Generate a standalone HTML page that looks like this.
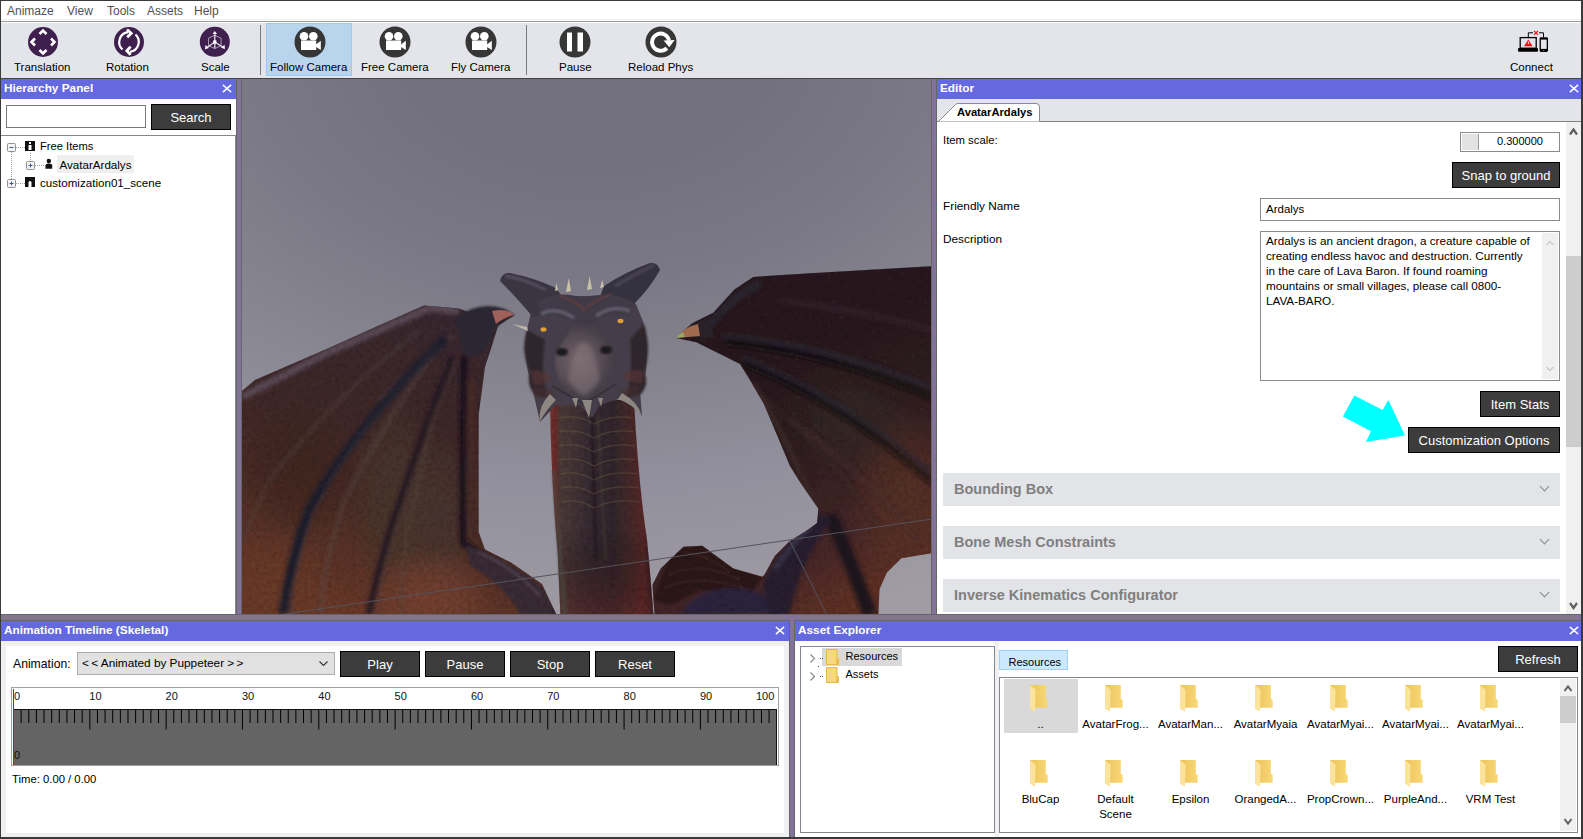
<!DOCTYPE html>
<html><head><meta charset="utf-8">
<style>
html,body{margin:0;padding:0;width:1583px;height:839px;overflow:hidden;background:#fff;}
body{position:relative;font-family:"Liberation Sans",sans-serif;font-size:11.5px;color:#000;}
.a{position:absolute;box-sizing:border-box;}
.t{position:absolute;white-space:nowrap;line-height:1;}
.title{background:#6569e0;color:#fff;font-weight:bold;font-size:11.8px;}
.spl{background:#83739a;}
.btn{position:absolute;box-sizing:border-box;background:#3c3c3c;border:1px solid #000;color:#fff;font-size:13px;text-align:center;}
.sec{position:absolute;left:943px;width:617px;height:33px;background:#e3e4e8;}
.sec span{position:absolute;left:11px;top:9px;font-weight:bold;font-size:14.5px;color:#7f7f7f;line-height:1;}
.sec i{position:absolute;right:12px;top:10px;width:6px;height:6px;border-right:1px solid #888;border-bottom:1px solid #888;transform:rotate(45deg);}
</style></head><body>
<!-- outer border -->
<div class="a" style="left:0;top:0;width:1583px;height:839px;border-left:1px solid #3a3a3a;border-top:1px solid #3a3a3a;border-right:2px solid #3a3a3a;border-bottom:2px solid #3a3a3a;z-index:50;pointer-events:none"></div>
<!-- menu -->
<div class="a" style="left:1px;top:1px;width:1580px;height:20px;background:#fff;"></div>
<div class="a" style="left:1px;top:19px;width:1580px;height:1px;background:#f0f0f0;"></div>
<div class="a" style="left:1px;top:21px;width:1580px;height:1px;background:#999;"></div>
<div class="t" style="left:7px;top:5px;font-size:12px;color:#505050">Animaze</div>
<div class="t" style="left:67px;top:5px;font-size:12px;color:#505050">View</div>
<div class="t" style="left:107px;top:5px;font-size:12px;color:#505050">Tools</div>
<div class="t" style="left:147px;top:5px;font-size:12px;color:#505050">Assets</div>
<div class="t" style="left:194px;top:5px;font-size:12px;color:#505050">Help</div>
<!-- toolbar -->
<div class="a" style="left:1px;top:23px;width:1580px;height:55px;background:#e4e5ea;"></div>
<div class="a" style="left:1px;top:78px;width:1580px;height:1px;background:#444;"></div>
<!-- toolbar items -->
<svg class="a" style="left:0;top:0" width="1583" height="80" viewBox="0 0 1583 80">
 <!-- Translation -->
 <circle cx="43" cy="42" r="15" fill="#3f1f4d"/>
 <g fill="none" stroke="#fff" stroke-width="2.6" stroke-linecap="butt" stroke-linejoin="miter">
  <polyline points="39.5,34 43,30.5 46.5,34"/>
  <polyline points="39.5,50 43,53.5 46.5,50"/>
  <polyline points="35,38.5 31.5,42 35,45.5"/>
  <polyline points="51,38.5 54.5,42 51,45.5"/>
 </g>
 <!-- Rotation -->
 <circle cx="129" cy="42" r="15" fill="#3f1f4d"/>
 <g fill="none" stroke="#fff" stroke-width="2.2">
  <path d="M128 32.2 A10 10 0 0 0 122.5 49.5"/>
  <path d="M130 51.8 A10 10 0 0 0 135.5 34.5"/>
 </g>
 <g fill="none" stroke="#fff" stroke-width="2.8" stroke-linejoin="miter">
  <polyline points="127,29.5 131.2,33.3 127.2,37.3"/>
  <polyline points="130.6,46.6 126.8,50.8 130.6,54.8"/>
 </g>
 <!-- Scale -->
 <circle cx="214.8" cy="41.8" r="15" fill="#3f1f4d"/>
 <g fill="none" stroke="#fff" stroke-width="1" opacity="0.55">
  <polygon points="214.8,35.3 208.5,38.2 208.5,45.6 214.8,48.7 221.1,45.6 221.1,38.2"/>
 </g>
 <g stroke="#fff" stroke-width="1.3" opacity="0.85">
  <line x1="214.8" y1="33" x2="214.8" y2="48"/>
  <line x1="214.8" y1="42" x2="207" y2="47.5"/>
  <line x1="214.8" y1="42" x2="222.6" y2="47"/>
 </g>
 <rect x="213.2" y="40.4" width="3.2" height="3.2" fill="#fff"/>
 <polygon points="212.6,34 214.8,30.9 217,34" fill="#fff"/>
 <polygon points="205,49.3 205.5,45 209,48" fill="#fff"/>
 <polygon points="225,48.9 224.5,44.8 221,47.8" fill="#fff"/>
 <!-- separator -->
 <rect x="260" y="25" width="1" height="50" fill="#7a7a7a"/>
 <!-- follow camera highlight -->
 <rect x="266.5" y="23.5" width="85" height="52" fill="#b9d5ee" stroke="#99c9f5" stroke-width="1"/>
 <g id="cam">
  <circle cx="310" cy="42" r="15.5" fill="#363636"/>
  <circle cx="304" cy="36.2" r="4.3" fill="#fff"/>
  <circle cx="313.3" cy="36.2" r="4.3" fill="#fff"/>
  <rect x="301" y="40.5" width="15.2" height="9.5" fill="#fff"/>
  <polygon points="316,44.5 320.8,40.8 320.8,50 316,47" fill="#fff"/>
 </g>
 <use href="#cam" x="85"/>
 <use href="#cam" x="171"/>
 <rect x="526" y="25" width="1" height="50" fill="#7a7a7a"/>
 <!-- Pause -->
 <circle cx="575" cy="42" r="15.5" fill="#363636"/>
 <rect x="567" y="32.5" width="5" height="19" fill="#fff"/>
 <rect x="577.5" y="32.5" width="5.5" height="19" fill="#fff"/>
 <!-- Reload -->
 <circle cx="661" cy="42" r="15.5" fill="#363636"/>
 <path d="M669.1 40.5 A8.6 8.6 0 1 0 666.9 48.1" fill="none" stroke="#fff" stroke-width="3.8"/>
 <polygon points="663.6,40.6 674.6,40 669.3,47.2" fill="#fff"/>
 <!-- Connect -->
 <g>
  <rect x="1520.2" y="37.6" width="16" height="10.6" fill="none" stroke="#000" stroke-width="1.3"/>
  <rect x="1518" y="48" width="20" height="3.8" rx="1" fill="#000"/>
  <rect x="1539.6" y="37.3" width="8.4" height="14.6" rx="1.4" fill="#000"/>
  <rect x="1540.9" y="39.6" width="5.8" height="9.3" fill="#e4e5ea"/>
  <rect x="1543.3" y="50.2" width="1" height="1" fill="#bbb"/>
  <polyline points="1528.3,37 1528.3,32.8 1533,32.8" fill="none" stroke="#000" stroke-width="1"/>
  <polyline points="1539,32.8 1543.5,32.8 1543.5,37" fill="none" stroke="#000" stroke-width="1"/>
  <path d="M1534 30.8 L1538 34.8 M1538 30.8 L1534 34.8" stroke="#e11" stroke-width="1.2"/>
  <polygon points="1528.3,39.5 1524,46.2 1532.6,46.2" fill="#e11"/>
  <rect x="1527.9" y="41.5" width="0.9" height="2.5" fill="#fff"/>
 </g>
</svg>
<div class="t" style="left:14px;top:62px;font-size:11.5px">Translation</div>
<div class="t" style="left:106px;top:62px;font-size:11.5px">Rotation</div>
<div class="t" style="left:201px;top:62px;font-size:11.5px">Scale</div>
<div class="t" style="left:270px;top:62px;font-size:11.5px">Follow Camera</div>
<div class="t" style="left:361px;top:62px;font-size:11.5px">Free Camera</div>
<div class="t" style="left:451px;top:62px;font-size:11.5px">Fly Camera</div>
<div class="t" style="left:559px;top:62px;font-size:11.5px">Pause</div>
<div class="t" style="left:628px;top:62px;font-size:11.5px">Reload Phys</div>
<div class="t" style="left:1510px;top:62px;font-size:11.5px">Connect</div>


<!-- hierarchy panel -->
<div class="a title" style="left:1px;top:79px;width:235px;height:20px;"><span class="t" style="left:3px;top:4px">Hierarchy Panel</span></div>
<div class="a" style="left:1px;top:99px;width:235px;height:515px;background:#fff;"></div>
<div class="a" style="left:6px;top:105px;width:140px;height:23px;border:1px solid #7a7a7a;background:#fff"></div>
<div class="btn" style="left:151px;top:104px;width:80px;height:26px;"><span class="t" style="left:0;right:0;top:6px;">Search</span></div>
<div class="a" style="left:1px;top:135px;width:235px;height:479px;border-top:1px solid #828790;border-right:1px solid #828790;"></div>
<svg class="a" style="left:0;top:135px" width="236" height="60" viewBox="0 135 236 60">
 <g stroke="#a0a0a0" stroke-width="1" stroke-dasharray="1,1" fill="none">
  <line x1="16" y1="147.5" x2="25" y2="147.5"/>
  <line x1="11.5" y1="152" x2="11.5" y2="179"/>
  <line x1="35" y1="165.5" x2="44" y2="165.5"/>
  <line x1="30.5" y1="153" x2="30.5" y2="161"/>
  <line x1="16" y1="183.5" x2="25" y2="183.5"/>
 </g>
 <g fill="#f4f4f4" stroke="#919191" stroke-width="1">
  <rect x="7.5" y="143.5" width="8" height="8" rx="1"/>
  <rect x="26.5" y="161.5" width="8" height="8" rx="1"/>
  <rect x="7.5" y="179.5" width="8" height="8" rx="1"/>
 </g>
 <g stroke="#3c5a9a" stroke-width="1">
  <line x1="9.5" y1="147.5" x2="13.5" y2="147.5"/>
  <line x1="28.5" y1="165.5" x2="32.5" y2="165.5"/>
  <line x1="30.5" y1="163.5" x2="30.5" y2="167.5"/>
  <line x1="9.5" y1="183.5" x2="13.5" y2="183.5"/>
  <line x1="11.5" y1="181.5" x2="11.5" y2="185.5"/>
 </g>
 <!-- info icon -->
 <rect x="25" y="141" width="10" height="10" fill="#111"/>
 <rect x="29" y="142" width="2" height="2" fill="#fff"/>
 <rect x="28.5" y="145" width="3" height="5" fill="#fff"/>
 <!-- person -->
 <circle cx="48.8" cy="161" r="2.2" fill="#111"/>
 <path d="M45.5 168.8 V165.5 Q45.5 163.5 48.8 163.5 Q52.2 163.5 52.2 165.5 V168.8 Z" fill="#111"/>
 <!-- scene -->
 <path d="M25 177 H35 V187 H31.5 V182 Q30 180 28.5 182 V187 H25 Z" fill="#111"/>
</svg>
<div class="a" style="left:57px;top:155px;width:77px;height:18px;background:#efefef"></div>
<div class="t" style="left:40px;top:141px;font-size:11.2px">Free Items</div>
<div class="t" style="left:59.5px;top:159px;font-size:11.6px">AvatarArdalys</div>
<div class="t" style="left:40px;top:177px;font-size:11.6px">customization01_scene</div>


<!-- splitters -->
<div class="a spl" style="left:237px;top:79px;width:4px;height:536px;"></div>
<div class="a" style="left:236px;top:79px;width:1px;height:536px;background:#666"></div>
<div class="a" style="left:241px;top:79px;width:1px;height:536px;background:#666"></div>
<div class="a spl" style="left:932px;top:79px;width:4px;height:536px;"></div>
<div class="a" style="left:931px;top:79px;width:1px;height:536px;background:#666"></div>
<div class="a" style="left:936px;top:79px;width:1px;height:536px;background:#666"></div>
<div class="a" style="left:1px;top:614px;width:1580px;height:1px;background:#666"></div>
<div class="a spl" style="left:1px;top:615px;width:1580px;height:5px;"></div>
<div class="a" style="left:1px;top:620px;width:789px;height:1px;background:#666"></div>
<div class="a" style="left:794px;top:620px;width:787px;height:1px;background:#666"></div>

<!-- viewport -->
<div class="a" id="vp" style="left:242px;top:79px;width:689px;height:535px;background:#85828d;overflow:hidden"></div>
<svg class="a" style="left:242px;top:79px" width="689" height="535" viewBox="242 79 689 535">
 <defs>
  <radialGradient id="sky" gradientUnits="userSpaceOnUse" cx="590" cy="40" r="600" gradientTransform="translate(590 40) scale(1.43 1) translate(-590 -40)">
   <stop offset="0" stop-color="#72707c"/>
   <stop offset="0.2" stop-color="#72707c"/>
   <stop offset="0.395" stop-color="#7a7884"/>
   <stop offset="0.59" stop-color="#878590"/>
   <stop offset="0.745" stop-color="#92909c"/>
   <stop offset="1" stop-color="#9f9ca4"/>
  </radialGradient>
  <linearGradient id="lw" gradientUnits="userSpaceOnUse" x1="440" y1="310" x2="360" y2="614">
   <stop offset="0" stop-color="#3a2a32"/>
   <stop offset="0.3" stop-color="#3e2a2c"/>
   <stop offset="0.65" stop-color="#4a2e28"/>
   <stop offset="1" stop-color="#6a3a2c"/>
  </linearGradient>
  <linearGradient id="rw" gradientUnits="userSpaceOnUse" x1="780" y1="290" x2="920" y2="560">
   <stop offset="0" stop-color="#2a1e22"/>
   <stop offset="0.45" stop-color="#2e2022"/>
   <stop offset="0.8" stop-color="#46292a"/>
   <stop offset="1" stop-color="#5e3228"/>
  </linearGradient>
  <linearGradient id="nk" gradientUnits="userSpaceOnUse" x1="550" y1="0" x2="654" y2="0">
   <stop offset="0" stop-color="#7a3634"/>
   <stop offset="0.05" stop-color="#6a2c2a"/>
   <stop offset="0.1" stop-color="#4e3c3a"/>
   <stop offset="0.35" stop-color="#3a2e34"/>
   <stop offset="0.6" stop-color="#33282e"/>
   <stop offset="0.8" stop-color="#4a2c2c"/>
   <stop offset="0.9" stop-color="#5a2a2a"/>
   <stop offset="1" stop-color="#2a2428"/>
  </linearGradient>
  <radialGradient id="hd" gradientUnits="userSpaceOnUse" cx="584" cy="368" r="80">
   <stop offset="0" stop-color="#7a6e72"/>
   <stop offset="0.3" stop-color="#54494e"/>
   <stop offset="0.65" stop-color="#3a3238"/>
   <stop offset="1" stop-color="#2a2428"/>
  </radialGradient>
  <filter id="bl1"><feGaussianBlur stdDeviation="1"/></filter>
  <filter id="bl06"><feGaussianBlur stdDeviation="0.6"/></filter>
  <filter id="bl2"><feGaussianBlur stdDeviation="2"/></filter>
  <filter id="bl4"><feGaussianBlur stdDeviation="4"/></filter>
  <filter id="bl8" x="-50%" y="-50%" width="200%" height="200%"><feGaussianBlur stdDeviation="10"/></filter>
  <filter id="tex" x="0" y="0" width="1" height="1">
   <feTurbulence type="fractalNoise" baseFrequency="0.25" numOctaves="2" seed="5" result="n"/>
   <feColorMatrix in="n" type="matrix" values="0 0 0 0 0  0 0 0 0 0  0 0 0 0 0  0 0 0 0.5 -0.15" result="a"/>
   <feComposite in="a" in2="SourceGraphic" operator="in" result="d"/>
   <feMerge><feMergeNode in="SourceGraphic"/><feMergeNode in="d"/></feMerge>
  </filter>
  <path id="lwp" d="M242 391 L255 380 L329 348 L380 325 L424 305.6 L459 308.6 L476 315 L492 310 L505 311 L514.7 315 L498 326 L492 345.5 L485 367 L478.6 415 L478.6 532 L485 549.6 L511 562.6 L542 584 L556 614 L242 614 Z"/>
  <path id="rwp" d="M676.2 338 L692.2 323.3 L713.3 312.8 L734.4 289.5 L753.4 276.9 L818.8 272.7 L932 266.3 L932 553 L901.2 558.2 L886.7 572.7 L879.5 589.3 L878.4 614 L654.5 614 L652.4 585.1 L660.7 568.6 L683.5 546.8 L702.2 545.7 L733.3 568.6 L762.3 576.8 L764.4 574.8 L774.8 556.1 L789.3 541.6 L805.9 531.2 L817.3 523 L818.3 508.4 L800 482 L790 466 L777 435 L764 404 L750 380 L740 364 L696.4 342.3 Z"/>
  <clipPath id="clw"><use href="#lwp"/></clipPath>
  <clipPath id="crw"><use href="#rwp"/></clipPath>
 <radialGradient id="rg1"><stop offset="0" stop-color="#4a3a30" stop-opacity="0.8"/><stop offset="0.5" stop-color="#4a3a30" stop-opacity="0.56"/><stop offset="1" stop-color="#4a3a30" stop-opacity="0"/></radialGradient>
<radialGradient id="rg2"><stop offset="0" stop-color="#4a3a34" stop-opacity="0.7"/><stop offset="0.5" stop-color="#4a3a34" stop-opacity="0.49"/><stop offset="1" stop-color="#4a3a34" stop-opacity="0"/></radialGradient>
<radialGradient id="rg3"><stop offset="0" stop-color="#6a3c2a" stop-opacity="0.8"/><stop offset="0.5" stop-color="#6a3c2a" stop-opacity="0.56"/><stop offset="1" stop-color="#6a3c2a" stop-opacity="0"/></radialGradient>
<radialGradient id="rg4"><stop offset="0" stop-color="#7a4434" stop-opacity="0.8"/><stop offset="0.5" stop-color="#7a4434" stop-opacity="0.56"/><stop offset="1" stop-color="#7a4434" stop-opacity="0"/></radialGradient>
<radialGradient id="rg5"><stop offset="0" stop-color="#3e2620" stop-opacity="0.6"/><stop offset="0.5" stop-color="#3e2620" stop-opacity="0.42"/><stop offset="1" stop-color="#3e2620" stop-opacity="0"/></radialGradient>
<radialGradient id="rg6"><stop offset="0" stop-color="#5a3428" stop-opacity="0.8"/><stop offset="0.5" stop-color="#5a3428" stop-opacity="0.56"/><stop offset="1" stop-color="#5a3428" stop-opacity="0"/></radialGradient>
<radialGradient id="rg7"><stop offset="0" stop-color="#2a2430" stop-opacity="0.9"/><stop offset="0.5" stop-color="#2a2430" stop-opacity="0.63"/><stop offset="1" stop-color="#2a2430" stop-opacity="0"/></radialGradient>
 <radialGradient id="rgx1"><stop offset="0" stop-color="#3a2e2a" stop-opacity="0.7"/><stop offset="1" stop-color="#3a2e2a" stop-opacity="0"/></radialGradient>
 </defs>
 <rect x="242" y="79" width="689" height="535" fill="url(#sky)"/>
 <!-- left wing -->
 <g filter="url(#tex)">
 <use href="#lwp" fill="url(#lw)"/>
 <g clip-path="url(#clw)">
  <ellipse cx="395" cy="500" rx="45" ry="105" fill="url(#rg1)"/>
  <ellipse cx="440" cy="520" rx="38" ry="90" fill="url(#rg2)"/>
  <ellipse cx="270" cy="590" rx="60" ry="68" fill="url(#rg3)"/>
  <ellipse cx="430" cy="600" rx="68" ry="52" fill="url(#rg4)"/>
  <ellipse cx="300" cy="470" rx="60" ry="75" fill="url(#rg5)"/>
  <g filter="url(#bl2)">
   <path d="M420 330 Q330 400 270 480 Q250 520 242 540" stroke="#54403e" stroke-width="4" fill="none" opacity="0.5"/>
   <path d="M436 350 Q380 430 345 500 Q325 560 320 614" stroke="#5a4a44" stroke-width="5" fill="none" opacity="0.45"/>
   <path d="M446 365 Q425 450 410 520 Q400 580 402 614" stroke="#5a4a40" stroke-width="4" fill="none" opacity="0.4"/>
   <path d="M455 335 Q420 360 380 400" stroke="#54444a" stroke-width="5" fill="none" opacity="0.5"/>
   <path d="M446 338 Q360 420 309 509 Q290 560 283 614" stroke="#22222e" stroke-width="9" fill="none"/>
   <path d="M440 345 Q358 425 313 512 Q296 560 290 614" stroke="#3a3a4a" stroke-width="2" fill="none" opacity="0.6"/>
   <path d="M452 356 Q420 440 392 524 Q375 580 369 614" stroke="#281e26" stroke-width="6" fill="none"/>
   <path d="M456 360 Q426 440 398 524 Q381 580 375 614" stroke="#4a3a3a" stroke-width="2" fill="none" opacity="0.7"/>
   <path d="M242 397 L329 352 L429 308 L459 311" stroke="#5e4e5a" stroke-width="7" fill="none"/>
   <path d="M464 356 Q462 450 463 543 Q500 565 556 614" stroke="#1e1820" stroke-width="6" fill="none"/>
   <path d="M472 380 Q471 470 474 535" stroke="#4a2e2c" stroke-width="7" fill="none"/>
  </g>
  <path d="M466 545 Q510 560 545 590 L556 614 L520 614 Q505 585 470 565 Z" fill="#3a2e38" filter="url(#bl1)"/>
  <path d="M478 552 Q512 566 540 596" stroke="#5a4a5a" stroke-width="3" fill="none" opacity="0.7" filter="url(#bl1)"/>
 </g>
 </g>
 <!-- left claw -->
 <path d="M455 318 Q480 300 505 309 L514.7 315 Q498 318 490 340 Q480 360 465 355 Z" fill="#2a2830" filter="url(#bl1)"/>
 <path d="M492 311 Q506 308 514.7 315 Q504 317 496 324 Z" fill="#a0605a"/>
 <!-- right wing -->
 <g filter="url(#tex)">
 <use href="#rwp" fill="url(#rw)"/>
 <g clip-path="url(#crw)">
  <ellipse cx="905" cy="500" rx="60" ry="90" fill="url(#rg6)"/>
  <ellipse cx="850" cy="420" rx="70" ry="60" fill="url(#rgx1)"/>
  <g filter="url(#bl2)">
   <path d="M725 342 Q830 352 932 397" stroke="#141014" stroke-width="8" fill="none" opacity="0.6"/>
   <path d="M722 336 Q830 345 932 388" stroke="#2e2e3a" stroke-width="4" fill="none" opacity="0.7"/>
   <path d="M745 364 Q840 402 932 482" stroke="#141014" stroke-width="7" fill="none" opacity="0.6"/>
   <path d="M742 358 Q840 395 932 473" stroke="#2a2a36" stroke-width="4" fill="none" opacity="0.7"/>
   <path d="M700 338 Q725 300 760 283" stroke="#2e2a36" stroke-width="7" fill="none"/>
   <path d="M752 384 Q790 440 815 510" stroke="#3e2a2a" stroke-width="6" fill="none"/>
   <path d="M780 300 Q860 310 932 330" stroke="#3a2a30" stroke-width="5" fill="none" opacity="0.6"/>
   <path d="M790 420 Q850 460 920 540" stroke="#4a3230" stroke-width="5" fill="none" opacity="0.5"/>
   <path d="M760 395 Q830 450 880 530" stroke="#3e2a2c" stroke-width="4" fill="none" opacity="0.5"/>
   <path d="M830 515 Q850 560 870 614" stroke="#201a24" stroke-width="14" fill="none"/>
  </g>
  <path d="M654 600 L668 562 L683.5 546.8 L690 548 L702.2 545.7 L733.3 568.6 L762 577 L750 595 L700 590 L670 605 Z" fill="#2e1c1c" filter="url(#bl1)"/>
  <g stroke="#4a3430" stroke-width="1.5" fill="none" opacity="0.8" filter="url(#bl1)">
   <path d="M668 575 Q700 560 740 580"/><path d="M664 588 Q700 572 748 590"/><path d="M686 552 Q710 556 730 572"/>
  </g>
  <path d="M680 614 Q700 585 740 588 Q770 592 790 614 Z" fill="#2e2840" filter="url(#bl2)"/>
  <path d="M762 585 Q775 555 818 512 L832 520 Q800 560 790 614 L770 614 Z" fill="#2a2432" filter="url(#bl2)"/>
  <path d="M775 570 Q790 545 812 525" stroke="#4a4a62" stroke-width="4" fill="none" opacity="0.7" filter="url(#bl2)"/>
 </g>
 </g>
 <!-- right claw -->
 <path d="M676.2 338 Q690 322 708 318 L715 338 Q695 336 676.2 338 Z" fill="#2a2028"/>
 <path d="M676.2 338 Q684 327 698 324 L700 336 Z" fill="#a06a50"/>
 <path d="M676.2 338 Q679 334 683 332 L685 337 Z" fill="#98a868"/>
 <!-- neck -->
 <linearGradient id="nk2" gradientUnits="userSpaceOnUse" x1="0" y1="400" x2="0" y2="614">
   <stop offset="0" stop-color="#000" stop-opacity="0"/>
   <stop offset="0.6" stop-color="#000" stop-opacity="0"/>
   <stop offset="1" stop-color="#6a2a2a" stop-opacity="0.45"/>
 </linearGradient>
 <g filter="url(#tex)">
 <path d="M550 400 Q551 480 557.8 553 L560.4 614 L653.4 614 Q650 570 647 540 Q638 480 634 400 Z" fill="url(#nk)"/>
 <path d="M550 400 Q551 480 557.8 553 L560.4 614 L653.4 614 Q650 570 647 540 Q638 480 634 400 Z" fill="url(#nk2)"/>
 </g>
 <path d="M552 470 Q556 540 562 614 L568 614 Q560 540 556 470 Z" fill="#4a4a40" opacity="0.6" filter="url(#bl1)"/>
 <g filter="url(#bl1)" opacity="0.8">
  <path d="M592 415 Q594 500 596 560" stroke="#1e181e" stroke-width="2.5" fill="none"/>
  <path d="M598 415 Q602 500 606 560" stroke="#3e3a30" stroke-width="2" fill="none"/>
 </g>
 <g stroke="#7a6a48" stroke-width="1.2" fill="none" opacity="0.35">
  <path d="M558 418 Q578 414 594 424 Q612 414 634 418"/>
  <path d="M558 432 Q578 428 594 438 Q612 428 634 432"/>
  <path d="M559 446 Q578 442 594 452 Q612 442 635 446"/>
  <path d="M559 460 Q578 456 594 466 Q612 456 636 460"/>
  <path d="M560 474 Q578 470 594 480 Q612 470 637 474"/>
  <path d="M561 488 Q578 484 594 494 Q612 484 638 488"/>
  <path d="M562 502 Q578 498 594 508 Q612 498 640 502"/>
 </g>
 <!-- head -->
 <radialGradient id="snt" gradientUnits="userSpaceOnUse" cx="578" cy="360" r="40">
  <stop offset="0" stop-color="#7a6a6e"/>
  <stop offset="0.6" stop-color="#5a4e56"/>
  <stop offset="1" stop-color="#4a4048" stop-opacity="0"/>
 </radialGradient>
 <g filter="url(#bl06)">
 <!-- face base -->
 <path d="M531 312 Q545 296 584 296 Q625 294 636 304 L644 324 Q648 350 646 372 L640 391 L642 416 Q632 402 622 398 L600 405 L592 418 L580 405 L556 405 L540 422 Q536 405 533 391 L528 372 Q524 350 527 330 Z" fill="#443e48"/>
 <!-- side frills -->
 <g filter="url(#bl1)">
  <path d="M527 330 Q520 350 530 372 Q526 385 535 395 L548 398 Q540 370 545 340 Z" fill="#2e262c"/>
  <path d="M644 324 Q652 350 644 372 Q650 385 640 395 L626 398 Q634 370 630 340 Z" fill="#2e262c"/>
  <path d="M530 372 Q540 368 552 378 Q545 386 534 385 Z" fill="#5a3634" opacity="0.6"/>
  <path d="M644 372 Q634 366 622 376 Q630 384 642 383 Z" fill="#5a3634" opacity="0.6"/>
  <path d="M532 388 Q545 386 556 394 Q545 400 536 398 Z" fill="#4a3232" opacity="0.5"/>
  <path d="M640 386 Q628 384 618 392 Q628 398 638 396 Z" fill="#4a3232" opacity="0.5"/>
 </g>
 <!-- horns -->
 <path d="M500 281 Q502 272 510 273 Q535 278 556 288 L566 302 Q550 318 532 316 Q515 296 500 281 Z" fill="#3a3442"/>
 <path d="M505 276 Q525 279 546 290" stroke="#5e5868" stroke-width="3" fill="none" opacity="0.7" filter="url(#bl1)"/>
 <path d="M660 270 Q658 262 650 263 Q625 272 604 286 L598 302 Q618 312 634 304 Q650 288 660 270 Z" fill="#363240"/>
 <path d="M654 265 Q635 274 615 286" stroke="#55505e" stroke-width="3" fill="none" opacity="0.7" filter="url(#bl1)"/>
 <!-- brow -->
 <path d="M538 300 Q560 290 584 298 Q610 290 634 302 L630 318 Q612 310 596 322 L584 330 L572 322 Q556 312 540 318 Z" fill="#403a46"/>
 <g filter="url(#bl1)" opacity="0.75">
  <path d="M541 314 Q556 306 574 318" stroke="#6a6a7a" stroke-width="3.5" fill="none"/>
  <path d="M596 316 Q612 304 630 311" stroke="#6a6a7a" stroke-width="3.5" fill="none"/>
  <path d="M560 296 Q575 300 584 310 Q594 300 612 294" stroke="#6a4040" stroke-width="2" fill="none"/>
 </g>
 <!-- snout -->
 <path d="M576 318 Q584 314 592 318 Q600 335 612 352 Q616 372 604 388 Q594 398 584 402 Q574 398 564 388 Q552 372 556 352 Q568 335 576 318 Z" fill="url(#snt)" opacity="0.85" filter="url(#bl1)"/>
 <path d="M578 345 Q584 340 590 345 Q598 365 600 380 Q592 392 584 396 Q576 392 568 380 Q570 365 578 345 Z" fill="#8a7c7e" opacity="0.5" filter="url(#bl2)"/>
 <ellipse cx="562" cy="352" rx="6" ry="4" fill="#1e1a1e" filter="url(#bl1)"/>
 <ellipse cx="606" cy="350" rx="6" ry="4" fill="#1e1a1e" filter="url(#bl1)"/>
 <path d="M552 386 L584 404 L616 384" stroke="#2a2228" stroke-width="2" fill="none" opacity="0.5"/>
 <!-- tusks & fangs -->
 <g fill="#8e8680">
  <path d="M550 394 Q538 406 539.6 421.9 Q546 410 556 400 Z"/>
  <path d="M622 393 Q638 402 641.8 415.6 Q632 404 618 399 Z"/>
  <path d="M582 400 L589 418 L592 400 Z"/>
  <path d="M572 398 L576 408 L578 398 Z"/>
  <path d="M598 398 L601 407 L603 398 Z"/>
 </g>
 </g>
 <ellipse cx="543.5" cy="329.5" rx="3" ry="2.2" fill="#e0a030"/>
 <ellipse cx="620.5" cy="321" rx="3" ry="2.2" fill="#e0a030"/>
 <g fill="#c8c0a8">
  <polygon points="555,291 556.3,283 558,290"/>
  <polygon points="566,292 568.8,278 571,291"/>
  <polygon points="587,290 589.7,276 592,289"/>
  <polygon points="600,288 602.2,280 604,287"/>
 </g>
 <polygon points="527,327 512,324 528,331" fill="#c0b8a8"/>
 <g stroke="#55535c" stroke-width="1" fill="none">
  <line x1="285" y1="614" x2="932" y2="519"/>
  <line x1="789.7" y1="540.7" x2="826.5" y2="614"/>
 </g>
</svg>



<!-- editor -->
<div class="a title" style="left:937px;top:79px;width:644px;height:20px;"><span class="t" style="left:3px;top:4px">Editor</span></div>
<div class="a" style="left:937px;top:99px;width:644px;height:23px;background:#e4e5ea;"></div>
<div class="a" style="left:937px;top:121px;width:644px;height:1px;background:#828282;"></div>
<div class="a" style="left:937px;top:122px;width:644px;height:492px;background:#fff;"></div>
<!-- tab -->
<svg class="a" style="left:937px;top:99px" width="120" height="24" viewBox="937 99 120 24">
 <path d="M938.5 121.5 L955.5 104.5 Q956.5 103.5 958 103.5 L1036 103.5 Q1039.5 103.5 1039.5 107 L1039.5 121.5" fill="#fff" stroke="#8a8a8a" stroke-width="1"/>
</svg>
<div class="t" style="left:957px;top:107px;font-size:11.2px;font-weight:bold">AvatarArdalys</div>
<div class="t" style="left:943px;top:134.5px;font-size:11.3px">Item scale:</div>
<div class="a" style="left:1460px;top:132px;width:100px;height:20px;border:1px solid #8a8a8a;background:#fff"></div>
<div class="a" style="left:1462px;top:134px;width:17px;height:16px;background:#e3e3e3;border-right:1px solid #9a9a9a"></div>
<div class="t" style="left:1497px;top:136px;font-size:11px">0.300000</div>
<div class="btn" style="left:1452px;top:162px;width:108px;height:26px;"><span class="t" style="left:0;right:0;top:5.5px;">Snap to ground</span></div>
<div class="t" style="left:943px;top:201px;font-size:11.8px">Friendly Name</div>
<div class="a" style="left:1260px;top:198px;width:300px;height:23px;border:1px solid #8a8a8a;background:#fff"></div>
<div class="t" style="left:1266px;top:204px;font-size:11.5px">Ardalys</div>
<div class="t" style="left:943px;top:234px;font-size:11.8px">Description</div>
<div class="a" style="left:1260px;top:231px;width:300px;height:150px;border:1px solid #8a8a8a;background:#fff"></div>
<div class="a" style="left:1542px;top:233px;width:16px;height:146px;background:#f0f0f0"></div>
<svg class="a" style="left:1542px;top:233px" width="16" height="146">
 <polyline points="4.5,12 8,8.5 11.5,12" fill="none" stroke="#c8c8c8" stroke-width="1.2"/>
 <polyline points="4.5,134 8,137.5 11.5,134" fill="none" stroke="#c8c8c8" stroke-width="1.2"/>
</svg>
<div class="a" style="left:1266px;top:233px;font-size:11.7px;line-height:15px;white-space:nowrap">Ardalys is an ancient dragon, a creature capable of<br>creating endless havoc and destruction. Currently<br>in the care of Lava Baron. If found roaming<br>mountains or small villages, please call 0800-<br>LAVA-BARO.</div>
<div class="btn" style="left:1480px;top:391px;width:80px;height:26px;"><span class="t" style="left:0;right:0;top:5.5px;">Item Stats</span></div>
<div class="btn" style="left:1408px;top:427px;width:152px;height:26px;"><span class="t" style="left:0;right:0;top:5.5px;">Customization Options</span></div>
<svg class="a" style="left:1335px;top:385px" width="80" height="70" viewBox="1335 385 80 70">
 <polygon points="1354.35,395.4 1382.7,410 1388.4,400 1405,435.5 1365.9,442.1 1371,431.3 1342.9,416.5" fill="#00ffff"/>
</svg>
<div class="sec" style="top:473px"><span>Bounding Box</span><i></i></div>
<div class="sec" style="top:526px"><span>Bone Mesh Constraints</span><i></i></div>
<div class="sec" style="top:579px"><span>Inverse Kinematics Configurator</span><i></i></div>
<!-- editor scrollbar -->
<div class="a" style="left:1566px;top:122px;width:15px;height:492px;background:#f0f0f0"></div>
<div class="a" style="left:1566px;top:256px;width:15px;height:191px;background:#cdcdcd"></div>
<svg class="a" style="left:1566px;top:122px" width="15" height="492">
 <polyline points="4,12.5 7.5,7.5 11,12.5" fill="none" stroke="#606060" stroke-width="2.2"/>
 <polyline points="4,481 7.5,486 11,481" fill="none" stroke="#606060" stroke-width="2.2"/>
</svg>


<!-- animation timeline -->
<div class="a title" style="left:1px;top:621px;width:788px;height:20px;"><span class="t" style="left:3px;top:4px">Animation Timeline (Skeletal)</span></div>
<div class="a" style="left:1px;top:641px;width:788px;height:196px;background:#f0f0f0;"></div>
<div class="a" style="left:6px;top:646px;width:778px;height:187px;background:#fff;"></div>
<div class="t" style="left:13px;top:658px;font-size:12.2px">Animation:</div>
<div class="a" style="left:77px;top:652px;width:258px;height:23px;border:1px solid #adadad;background:#e1e1e1"></div>
<div class="t" style="left:82px;top:658px;font-size:11.8px">&lt;&thinsp;&lt; Animated by Puppeteer &gt;&thinsp;&gt;</div>
<svg class="a" style="left:318px;top:659px" width="12" height="10"><polyline points="1.5,2.5 5.5,6.5 9.5,2.5" fill="none" stroke="#333" stroke-width="1.1"/></svg>
<div class="btn" style="left:340px;top:651px;width:80px;height:26px;"><span class="t" style="left:0;right:0;top:5.5px;">Play</span></div>
<div class="btn" style="left:425px;top:651px;width:80px;height:26px;"><span class="t" style="left:0;right:0;top:5.5px;">Pause</span></div>
<div class="btn" style="left:510px;top:651px;width:80px;height:26px;"><span class="t" style="left:0;right:0;top:5.5px;">Stop</span></div>
<div class="btn" style="left:595px;top:651px;width:80px;height:26px;"><span class="t" style="left:0;right:0;top:5.5px;">Reset</span></div>
<div class="a" style="left:11px;top:687px;width:768px;height:79px;border:1px solid #a0a0a0;background:#fff"></div>
<div class="a" style="left:13px;top:709px;width:764px;height:56px;background:#646464;border-top:1px solid #111;border-right:1px solid #111"></div>
<svg class="a" id="ticks" style="left:0;top:700px" width="790" height="40" viewBox="0 700 790 40"><rect x="20.63" y="710" width="1" height="13" fill="#000"/><rect x="28.26" y="710" width="1" height="13" fill="#000"/><rect x="35.90" y="710" width="1" height="13" fill="#000"/><rect x="43.53" y="710" width="1" height="13" fill="#000"/><rect x="51.16" y="710" width="1" height="13" fill="#000"/><rect x="58.79" y="710" width="1" height="13" fill="#000"/><rect x="66.42" y="710" width="1" height="13" fill="#000"/><rect x="74.06" y="710" width="1" height="13" fill="#000"/><rect x="81.69" y="710" width="1" height="13" fill="#000"/><rect x="89.32" y="710" width="1" height="19.5" fill="#000"/><rect x="96.95" y="710" width="1" height="13" fill="#000"/><rect x="104.58" y="710" width="1" height="13" fill="#000"/><rect x="112.22" y="710" width="1" height="13" fill="#000"/><rect x="119.85" y="710" width="1" height="13" fill="#000"/><rect x="127.48" y="710" width="1" height="13" fill="#000"/><rect x="135.11" y="710" width="1" height="13" fill="#000"/><rect x="142.74" y="710" width="1" height="13" fill="#000"/><rect x="150.38" y="710" width="1" height="13" fill="#000"/><rect x="158.01" y="710" width="1" height="13" fill="#000"/><rect x="165.64" y="710" width="1" height="19.5" fill="#000"/><rect x="173.27" y="710" width="1" height="13" fill="#000"/><rect x="180.90" y="710" width="1" height="13" fill="#000"/><rect x="188.54" y="710" width="1" height="13" fill="#000"/><rect x="196.17" y="710" width="1" height="13" fill="#000"/><rect x="203.80" y="710" width="1" height="13" fill="#000"/><rect x="211.43" y="710" width="1" height="13" fill="#000"/><rect x="219.06" y="710" width="1" height="13" fill="#000"/><rect x="226.70" y="710" width="1" height="13" fill="#000"/><rect x="234.33" y="710" width="1" height="13" fill="#000"/><rect x="241.96" y="710" width="1" height="19.5" fill="#000"/><rect x="249.59" y="710" width="1" height="13" fill="#000"/><rect x="257.22" y="710" width="1" height="13" fill="#000"/><rect x="264.86" y="710" width="1" height="13" fill="#000"/><rect x="272.49" y="710" width="1" height="13" fill="#000"/><rect x="280.12" y="710" width="1" height="13" fill="#000"/><rect x="287.75" y="710" width="1" height="13" fill="#000"/><rect x="295.38" y="710" width="1" height="13" fill="#000"/><rect x="303.02" y="710" width="1" height="13" fill="#000"/><rect x="310.65" y="710" width="1" height="13" fill="#000"/><rect x="318.28" y="710" width="1" height="19.5" fill="#000"/><rect x="325.91" y="710" width="1" height="13" fill="#000"/><rect x="333.54" y="710" width="1" height="13" fill="#000"/><rect x="341.18" y="710" width="1" height="13" fill="#000"/><rect x="348.81" y="710" width="1" height="13" fill="#000"/><rect x="356.44" y="710" width="1" height="13" fill="#000"/><rect x="364.07" y="710" width="1" height="13" fill="#000"/><rect x="371.70" y="710" width="1" height="13" fill="#000"/><rect x="379.34" y="710" width="1" height="13" fill="#000"/><rect x="386.97" y="710" width="1" height="13" fill="#000"/><rect x="394.60" y="710" width="1" height="19.5" fill="#000"/><rect x="402.23" y="710" width="1" height="13" fill="#000"/><rect x="409.86" y="710" width="1" height="13" fill="#000"/><rect x="417.50" y="710" width="1" height="13" fill="#000"/><rect x="425.13" y="710" width="1" height="13" fill="#000"/><rect x="432.76" y="710" width="1" height="13" fill="#000"/><rect x="440.39" y="710" width="1" height="13" fill="#000"/><rect x="448.02" y="710" width="1" height="13" fill="#000"/><rect x="455.66" y="710" width="1" height="13" fill="#000"/><rect x="463.29" y="710" width="1" height="13" fill="#000"/><rect x="470.92" y="710" width="1" height="19.5" fill="#000"/><rect x="478.55" y="710" width="1" height="13" fill="#000"/><rect x="486.18" y="710" width="1" height="13" fill="#000"/><rect x="493.82" y="710" width="1" height="13" fill="#000"/><rect x="501.45" y="710" width="1" height="13" fill="#000"/><rect x="509.08" y="710" width="1" height="13" fill="#000"/><rect x="516.71" y="710" width="1" height="13" fill="#000"/><rect x="524.34" y="710" width="1" height="13" fill="#000"/><rect x="531.98" y="710" width="1" height="13" fill="#000"/><rect x="539.61" y="710" width="1" height="13" fill="#000"/><rect x="547.24" y="710" width="1" height="19.5" fill="#000"/><rect x="554.87" y="710" width="1" height="13" fill="#000"/><rect x="562.50" y="710" width="1" height="13" fill="#000"/><rect x="570.14" y="710" width="1" height="13" fill="#000"/><rect x="577.77" y="710" width="1" height="13" fill="#000"/><rect x="585.40" y="710" width="1" height="13" fill="#000"/><rect x="593.03" y="710" width="1" height="13" fill="#000"/><rect x="600.66" y="710" width="1" height="13" fill="#000"/><rect x="608.30" y="710" width="1" height="13" fill="#000"/><rect x="615.93" y="710" width="1" height="13" fill="#000"/><rect x="623.56" y="710" width="1" height="19.5" fill="#000"/><rect x="631.19" y="710" width="1" height="13" fill="#000"/><rect x="638.82" y="710" width="1" height="13" fill="#000"/><rect x="646.46" y="710" width="1" height="13" fill="#000"/><rect x="654.09" y="710" width="1" height="13" fill="#000"/><rect x="661.72" y="710" width="1" height="13" fill="#000"/><rect x="669.35" y="710" width="1" height="13" fill="#000"/><rect x="676.98" y="710" width="1" height="13" fill="#000"/><rect x="684.62" y="710" width="1" height="13" fill="#000"/><rect x="692.25" y="710" width="1" height="13" fill="#000"/><rect x="699.88" y="710" width="1" height="19.5" fill="#000"/><rect x="707.51" y="710" width="1" height="13" fill="#000"/><rect x="715.14" y="710" width="1" height="13" fill="#000"/><rect x="722.78" y="710" width="1" height="13" fill="#000"/><rect x="730.41" y="710" width="1" height="13" fill="#000"/><rect x="738.04" y="710" width="1" height="13" fill="#000"/><rect x="745.67" y="710" width="1" height="13" fill="#000"/><rect x="753.30" y="710" width="1" height="13" fill="#000"/><rect x="760.94" y="710" width="1" height="13" fill="#000"/><rect x="768.57" y="710" width="1" height="13" fill="#000"/></svg><div class="t" style="left:89.3px;top:691px;font-size:11px;color:#111">10</div><div class="t" style="left:165.6px;top:691px;font-size:11px;color:#111">20</div><div class="t" style="left:242.0px;top:691px;font-size:11px;color:#111">30</div><div class="t" style="left:318.3px;top:691px;font-size:11px;color:#111">40</div><div class="t" style="left:394.6px;top:691px;font-size:11px;color:#111">50</div><div class="t" style="left:470.9px;top:691px;font-size:11px;color:#111">60</div><div class="t" style="left:547.2px;top:691px;font-size:11px;color:#111">70</div><div class="t" style="left:623.6px;top:691px;font-size:11px;color:#111">80</div><div class="t" style="left:699.9px;top:691px;font-size:11px;color:#111">90</div><div class="t" style="left:756px;top:691px;font-size:11px;color:#111">100</div>
<div class="a" style="left:13px;top:689px;width:1px;height:76px;background:#e00"></div>
<div class="t" style="left:14px;top:691px;font-size:11px;color:#111">0</div>
<div class="t" style="left:14px;top:750px;font-size:11px;color:#111">0</div>
<div class="t" style="left:12px;top:774px;font-size:11.3px">Time: 0.00 / 0.00</div>

<div class="a spl" style="left:790px;top:620px;width:4px;height:217px;"></div>
<div class="a" style="left:789px;top:620px;width:1px;height:217px;background:#666"></div>
<div class="a" style="left:794px;top:620px;width:1px;height:217px;background:#666"></div>

<!-- asset explorer -->
<div class="a title" style="left:795px;top:621px;width:786px;height:20px;"><span class="t" style="left:3px;top:4px">Asset Explorer</span></div>
<div class="a" style="left:795px;top:641px;width:786px;height:196px;background:#fff;"></div>
<div class="a" style="left:800px;top:646px;width:195px;height:187px;border:1px solid #828790;background:#fff"></div>
<div class="a" style="left:995px;top:641px;width:4px;height:196px;background:#f0f0f0"></div>
<div class="a" style="left:822px;top:648px;width:80px;height:18px;background:#d9d9d9"></div>
<svg class="a" style="left:800px;top:646px" width="60" height="45" viewBox="800 646 60 45">
 <g fill="none" stroke="#8a8a8a" stroke-width="1.2"><polyline points="810.5,654.5 814.5,658.5 810.5,662.5"/><polyline points="810.5,672.5 814.5,676.5 810.5,680.5"/></g>
 <g fill="#555"><rect x="820" y="658" width="1" height="1"/><rect x="822" y="658" width="1" height="1"/><rect x="820" y="676" width="1" height="1"/><rect x="822" y="676" width="1" height="1"/><rect x="818" y="666" width="1" height="1"/></g>
 <g id="sfold"><path d="M826.5 649.5 H837 V664.5 H826.5 Z" fill="#f8d978" stroke="#e5b84a" stroke-width="1"/><path d="M837 658.5 H838.5 V664.5 H837 Z" fill="#f2c94c" stroke="#e5b84a" stroke-width="1"/></g>
 <use href="#sfold" y="18"/>
</svg>
<div class="t" style="left:845.5px;top:651px;font-size:11px">Resources</div>
<div class="t" style="left:845.5px;top:669px;font-size:11px">Assets</div>
<div class="a" style="left:999px;top:650px;width:69px;height:20px;background:#cce8ff;border:1px solid #99d1ff"></div>
<div class="t" style="left:1008.5px;top:656.5px;font-size:11px">Resources</div>
<div class="btn" style="left:1498px;top:646px;width:80px;height:26px;"><span class="t" style="left:0;right:0;top:5.5px;">Refresh</span></div>
<div class="a" style="left:999px;top:677px;width:579px;height:156px;border:1px solid #828790;background:#fff"></div>
<div class="a" style="left:1004px;top:679px;width:74px;height:54px;background:#d9d9d9"></div>
<div class="a" style="left:1560px;top:679px;width:16px;height:152px;background:#f0f0f0"></div>
<div class="a" style="left:1560px;top:696px;width:16px;height:27px;background:#cdcdcd"></div>
<svg class="a" style="left:1560px;top:679px" width="16" height="152">
 <polyline points="4.5,12 8,7.5 11.5,12" fill="none" stroke="#606060" stroke-width="2"/>
 <polyline points="4.5,140 8,144.5 11.5,140" fill="none" stroke="#606060" stroke-width="2"/>
</svg>
<svg class="a" style="left:1000px;top:680px" width="560" height="150" viewBox="1000 680 560 150">
 <defs>
 <linearGradient id="fb" x1="0" y1="0" x2="1" y2="0"><stop offset="0" stop-color="#edc35a"/><stop offset="1" stop-color="#f8d877"/></linearGradient>
 <g id="fold">
  <path d="M0 0 H15.8 V13.8 L17.7 15 V22.7 H5 Z" fill="url(#fb)"/>
  <path d="M0 0 L5.6 4.8 L5 26.7 L0 23.7 Z" fill="#fbe39b"/>
 </g>
 </defs>
 <use href="#fold" x="1030" y="685"/>
 <use href="#fold" x="1030" y="760"/>
 <use href="#fold" x="1105" y="685"/>
 <use href="#fold" x="1105" y="760"/>
 <use href="#fold" x="1180" y="685"/>
 <use href="#fold" x="1180" y="760"/>
 <use href="#fold" x="1255" y="685"/>
 <use href="#fold" x="1255" y="760"/>
 <use href="#fold" x="1330" y="685"/>
 <use href="#fold" x="1330" y="760"/>
 <use href="#fold" x="1405" y="685"/>
 <use href="#fold" x="1405" y="760"/>
 <use href="#fold" x="1480" y="685"/>
 <use href="#fold" x="1480" y="760"/>
</svg>
<div class="t" style="left:1000.5px;width:80px;text-align:center;top:718.5px;font-size:11.5px">..</div>
<div class="t" style="left:1000.5px;width:80px;text-align:center;top:793.5px;font-size:11.5px">BluCap</div>
<div class="t" style="left:1075.5px;width:80px;text-align:center;top:718.5px;font-size:11.5px">AvatarFrog...</div>
<div class="t" style="left:1075.5px;width:80px;text-align:center;top:793.5px;font-size:11.5px">Default</div>
<div class="t" style="left:1075.5px;width:80px;text-align:center;top:808.5px;font-size:11.5px">Scene</div>
<div class="t" style="left:1150.5px;width:80px;text-align:center;top:718.5px;font-size:11.5px">AvatarMan...</div>
<div class="t" style="left:1150.5px;width:80px;text-align:center;top:793.5px;font-size:11.5px">Epsilon</div>
<div class="t" style="left:1225.5px;width:80px;text-align:center;top:718.5px;font-size:11.5px">AvatarMyaia</div>
<div class="t" style="left:1225.5px;width:80px;text-align:center;top:793.5px;font-size:11.5px">OrangedA...</div>
<div class="t" style="left:1300.5px;width:80px;text-align:center;top:718.5px;font-size:11.5px">AvatarMyai...</div>
<div class="t" style="left:1300.5px;width:80px;text-align:center;top:793.5px;font-size:11.5px">PropCrown...</div>
<div class="t" style="left:1375.5px;width:80px;text-align:center;top:718.5px;font-size:11.5px">AvatarMyai...</div>
<div class="t" style="left:1375.5px;width:80px;text-align:center;top:793.5px;font-size:11.5px">PurpleAnd...</div>
<div class="t" style="left:1450.5px;width:80px;text-align:center;top:718.5px;font-size:11.5px">AvatarMyai...</div>
<div class="t" style="left:1450.5px;width:80px;text-align:center;top:793.5px;font-size:11.5px">VRM Test</div>

<svg class="a" style="left:0;top:0;z-index:5" width="1583" height="839">
 <g stroke="#fff" stroke-width="1.6" stroke-linecap="square">
  <path d="M223.5 85.5 L230.5 91.5 M230.5 85.5 L223.5 91.5"/>
  <path d="M1570.5 85.5 L1577.5 91.5 M1577.5 85.5 L1570.5 91.5"/>
  <path d="M776.5 627.5 L783.5 633.5 M783.5 627.5 L776.5 633.5"/>
  <path d="M1570.5 627.5 L1577.5 633.5 M1577.5 627.5 L1570.5 633.5"/>
 </g>
</svg>
</body></html>
